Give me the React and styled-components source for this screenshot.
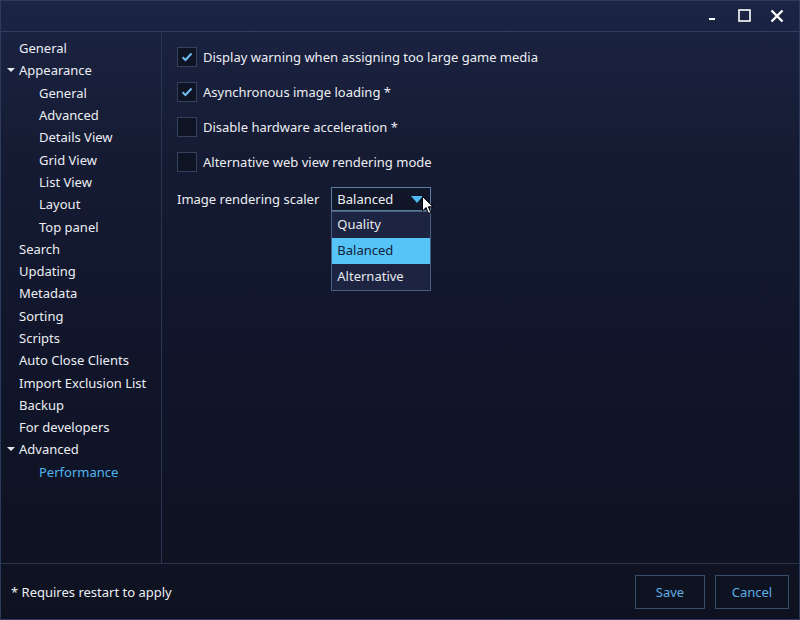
import React from "react";
import styled, { createGlobalStyle } from "styled-components";

const Global = createGlobalStyle`
  html, body { margin: 0; padding: 0; background: #0e1220; }
  body { font-family: "Noto Sans", "DejaVu Sans", sans-serif; }
`;

const Window = styled.div`
  position: relative;
  width: 800px;
  height: 620px;
  box-sizing: border-box;
  border: 1px solid #2c3a5c;
  display: flex;
  flex-direction: column;
  background: linear-gradient(180deg, #1b2444 0%, #151b32 25%, #10152a 60%, #0e1220 100%);
  color: #eceef3;
  font-size: 13px;
  overflow: hidden;
`;

const TitleBar = styled.div`
  height: 30px;
  flex: none;
  display: flex;
  justify-content: flex-end;
  align-items: center;
  padding-right: 6px;
  border-bottom: 1px solid #2e3d60;
`;

const WinButton = styled.button`
  width: 32px;
  height: 30px;
  border: none;
  background: transparent;
  padding: 0;
  display: flex;
  align-items: center;
  justify-content: center;
`;

const Body = styled.div`
  flex: 1;
  display: flex;
  min-height: 0;
  border-bottom: 1px solid #2a3650;
`;

const Sidebar = styled.nav`
  width: 160px;
  flex: none;
  border-right: 1px solid #2a3650;
  padding-top: 5px;
  display: flex;
  flex-direction: column;
`;

const NavItem = styled.div`
  height: 22.3px;
  line-height: 22px;
  display: flex;
  align-items: center;
  padding-left: ${({ $level }) => ($level ? 38 : 18)}px;
  color: ${({ $active }) => ($active ? "#4fb3ee" : "inherit")};
  position: relative;
  white-space: nowrap;
`;

const Caret = styled.span`
  position: absolute;
  left: 6px;
  top: 9px;
  width: 0;
  height: 0;
  border-left: 4px solid transparent;
  border-right: 4px solid transparent;
  border-top: 4px solid #e6e8ee;
`;

const Content = styled.section`
  flex: 1;
  padding: 11px 0 0 15px;
  display: flex;
  flex-direction: column;
`;

const CheckRow = styled.label`
  height: 35px;
  display: flex;
  align-items: center;
  gap: 6px;
  margin-top: ${({ $first }) => ($first ? "-4px" : "0")};
`;

const Box = styled.span`
  width: 18px;
  height: 18px;
  border: 1px solid #34425e;
  background: #0f1424;
  display: flex;
  align-items: center;
  justify-content: center;
`;

const SelectRow = styled.div`
  display: flex;
  align-items: center;
  gap: 12px;
  margin-top: 8px;
`;

const SelectBox = styled.div`
  position: relative;
  width: 98px;
  height: 22px;
  border: 1px solid #5b7c9e;
  background: #111629;
  display: flex;
  align-items: center;
`;

const SelectText = styled.span`
  padding-left: 5px;
  flex: 1;
`;

const Arrow = styled.span`
  width: 0;
  height: 0;
  border-left: 6px solid transparent;
  border-right: 6px solid transparent;
  border-top: 7px solid #4fb8f0;
  margin-right: 7px;
`;

const Menu = styled.ul`
  position: absolute;
  left: -1px;
  top: 23px;
  width: 98px;
  margin: 0;
  padding: 0;
  list-style: none;
  border: 1px solid #4a5f80;
  background: #1d2441;
  z-index: 2;
`;

const MenuItem = styled.li`
  height: 26px;
  line-height: 25px;
  padding-left: 5px;
  background: ${({ $selected }) => ($selected ? "#56c4f6" : "transparent")};
  color: ${({ $selected }) => ($selected ? "#10213a" : "#e6e8ee")};
`;

const Pointer = styled.svg`
  position: absolute;
  left: 90px;
  top: 8px;
  z-index: 3;
`;

const Footer = styled.footer`
  height: 55px;
  flex: none;
  display: flex;
  align-items: center;
  justify-content: space-between;
  padding: 0 10px;
`;

const Note = styled.span`
  padding-top: 1px;
`;

const Buttons = styled.div`
  display: flex;
  gap: 10px;
`;

const FooterButton = styled.button`
  height: 34px;
  width: ${({ $w }) => $w}px;
  border: 1px solid #3a4d6c;
  background: #0e1322;
  color: #5eaee4;
  font-family: inherit;
  font-size: 13px;
`;

const Check = () => (
  <svg width="12" height="10" viewBox="0 0 12 10">
    <path d="M1.5 5.2 L4.5 8 L10.5 1.5" fill="none" stroke="#6cbcf2" strokeWidth="2" />
  </svg>
);

const nav = [
  { t: "General" },
  { t: "Appearance", open: true },
  { t: "General", l: 1 },
  { t: "Advanced", l: 1 },
  { t: "Details View", l: 1 },
  { t: "Grid View", l: 1 },
  { t: "List View", l: 1 },
  { t: "Layout", l: 1 },
  { t: "Top panel", l: 1 },
  { t: "Search" },
  { t: "Updating" },
  { t: "Metadata" },
  { t: "Sorting" },
  { t: "Scripts" },
  { t: "Auto Close Clients" },
  { t: "Import Exclusion List" },
  { t: "Backup" },
  { t: "For developers" },
  { t: "Advanced", open: true },
  { t: "Performance", l: 1, active: true },
];

const options = [
  { t: "Display warning when assigning too large game media", c: true },
  { t: "Asynchronous image loading *", c: true },
  { t: "Disable hardware acceleration *", c: false },
  { t: "Alternative web view rendering mode", c: false },
];

export default function App() {
  return (
    <>
      <Global />
      <Window>
        <TitleBar>
          <WinButton aria-label="minimize">
            <svg width="12" height="12" viewBox="0 0 12 12">
              <rect x="2" y="8" width="6" height="2" fill="#fff" />
            </svg>
          </WinButton>
          <WinButton aria-label="maximize">
            <svg width="14" height="14" viewBox="0 0 14 14">
              <rect x="1" y="1" width="11" height="11" fill="none" stroke="#fff" strokeWidth="1.6" />
            </svg>
          </WinButton>
          <WinButton aria-label="close">
            <svg width="14" height="14" viewBox="0 0 14 14">
              <path d="M1.5 1.5 L12.5 12.5 M12.5 1.5 L1.5 12.5" stroke="#fff" strokeWidth="2.4" />
            </svg>
          </WinButton>
        </TitleBar>
        <Body>
          <Sidebar>
            {nav.map((n, i) => (
              <NavItem key={i} $level={n.l} $active={n.active}>
                {n.open && <Caret />}
                {n.t}
              </NavItem>
            ))}
          </Sidebar>
          <Content>
            {options.map((o, i) => (
              <CheckRow key={i} $first={i === 0}>
                <Box>{o.c && <Check />}</Box>
                {o.t}
              </CheckRow>
            ))}
            <SelectRow>
              Image rendering scaler
              <SelectBox>
                <SelectText>Balanced</SelectText>
                <Arrow />
                <Menu>
                  <MenuItem>Quality</MenuItem>
                  <MenuItem $selected>Balanced</MenuItem>
                  <MenuItem>Alternative</MenuItem>
                </Menu>
                <Pointer width="12" height="19" viewBox="0 0 12 19">
                  <path d="M0.5 0.5 L0.5 15 L4 11.5 L6.5 17.5 L8.8 16.5 L6.3 10.8 L11 10.8 Z" fill="#fff" stroke="#000" strokeWidth="1" />
                </Pointer>
              </SelectBox>
            </SelectRow>
          </Content>
        </Body>
        <Footer>
          <Note>* Requires restart to apply</Note>
          <Buttons>
            <FooterButton $w={70}>Save</FooterButton>
            <FooterButton $w={74}>Cancel</FooterButton>
          </Buttons>
        </Footer>
      </Window>
    </>
  );
}
